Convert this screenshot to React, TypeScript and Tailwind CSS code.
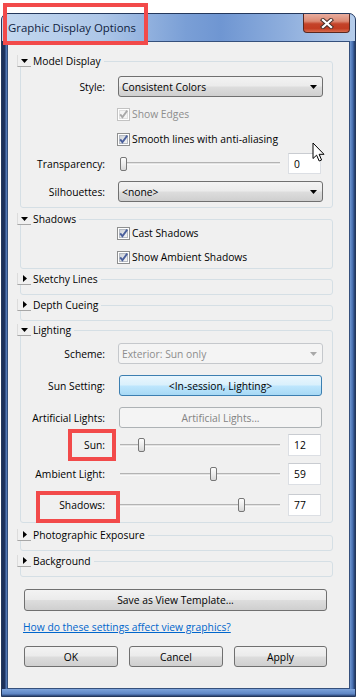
import React from "react";

const btnGrad =
  "bg-[linear-gradient(180deg,#f3f3f3_0%,#ebebeb_48%,#dddddd_52%,#cfcfcf_100%)]";

function DownTri({ color = "#000" }: { color?: string }) {
  return (
    <svg width="7" height="4" viewBox="0 0 7 4" className="shrink-0">
      <path d="M0 0H7L3.5 4Z" fill={color} />
    </svg>
  );
}

function RightTri() {
  return (
    <svg width="4" height="7" viewBox="0 0 4 7" className="shrink-0">
      <path d="M0 0L4 3.5L0 7Z" fill="#000" />
    </svg>
  );
}

function CheckBox({ disabled }: { disabled?: boolean }) {
  return (
    <svg width="13" height="13" viewBox="0 0 13 13" className="shrink-0">
      <defs>
        <linearGradient id="cbg" x1="0" y1="0" x2="1" y2="1">
          <stop offset="0" stopColor="#cbcfd5" />
          <stop offset="1" stopColor="#f7f7f7" />
        </linearGradient>
      </defs>
      <rect x="0.5" y="0.5" width="12" height="12" fill="#fff" stroke={disabled ? "#c2c2c2" : "#8e8f8f"} />
      <rect
        x="2.5"
        y="2.5"
        width="8"
        height="8"
        fill={disabled ? "#f4f4f4" : "url(#cbg)"}
        stroke={disabled ? "#e0e0e0" : "#b5bac2"}
      />
      <path
        d="M3.2 6.4 L5.4 9.2 L10.2 2.6"
        stroke={disabled ? "#a9a9a9" : "#4a5f9c"}
        strokeWidth="1.9"
        fill="none"
      />
    </svg>
  );
}

function Row({ label, h, children, className = "" }: { label: string; h: string; children: React.ReactNode; className?: string }) {
  return (
    <div className={"flex items-center " + h + " " + className}>
      <div className="w-[84px] shrink-0 text-right text-[10.3px] leading-[12px]">{label}</div>
      <div className="ml-[13px] flex items-center">{children}</div>
    </div>
  );
}

function Select({ text, disabled }: { text: string; disabled?: boolean }) {
  return (
    <div
      className={
        disabled
          ? "flex h-[21px] w-[205px] items-center justify-between rounded-[3px] border border-[#c5c8cc] bg-[#f4f4f4] pl-[3px] pr-[5px]"
          : "flex h-[21px] w-[205px] items-center justify-between rounded-[3px] border border-[#707070] pl-[3px] pr-[5px] " + btnGrad
      }
    >
      <span className={disabled ? "text-[10.3px] leading-[12px] text-[#8d8d8d]" : "text-[10.3px] leading-[12px] text-black"}>{text}</span>
      <DownTri color={disabled ? "#a8a8a8" : "#000"} />
    </div>
  );
}

function Check({ label, disabled, className = "" }: { label: string; disabled?: boolean; className?: string }) {
  return (
    <div className={"flex h-[20px] items-center pl-[96px] " + className}>
      <CheckBox disabled={disabled} />
      <span className={disabled ? "ml-[2px] text-[10.3px] leading-[12px] text-[#8d8d8d]" : "ml-[2px] text-[10.3px] leading-[12px] text-black"}>
        {label}
      </span>
    </div>
  );
}

function Slider({ value }: { value: number }) {
  const left = 3 + (value / 100) * 154 - 3.5;
  return (
    <div className="relative ml-[2px] flex h-[16px] w-[160px] items-center">
      <div className="h-[3px] w-full border-t border-t-[#b3b3b3] border-b border-b-[#f8f8f8] bg-[#e3e3e3]" />
      <div
        className="absolute top-[1px] h-[14px] w-[7px] rounded-[2px] border border-[#777] bg-[linear-gradient(180deg,#fdfdfd_0%,#e9e9e9_60%,#d6d6d6_100%)]"
        style={{ left }}
      />
    </div>
  );
}

function NumBox({ value, h = "h-[22px]" }: { value: string; h?: string }) {
  return (
    <div className={"ml-[8px] flex w-[33px] items-center border border-[#dcdfe4] border-t-[#c9ccd1] bg-white pl-[5px] text-[10.3px] leading-[12px] " + h}>
      {value}
    </div>
  );
}

function Group({
  title,
  open,
  className = "",
  children,
}: {
  title: string;
  open: boolean;
  className?: string;
  children?: React.ReactNode;
}) {
  return (
    <div className={className}>
      <div className="relative z-10 ml-[9px] flex h-[12px] w-fit items-center bg-[#f0f0f0] pr-[3px]">
        <div className="flex h-[12px] w-[14px] items-center justify-center border-b border-l border-b-[#a7a7a7] border-l-[#dcdcdc]">
          {open ? <DownTri /> : <RightTri />}
        </div>
        <span className="ml-[2px] text-[10.3px] leading-[12px]">{title}</span>
      </div>
      <div
        className={
          open
            ? "-mt-[6px] ml-[12px] w-[313px] rounded-[3px] border border-[#d5dfe5]"
            : "-mt-[6px] ml-[12px] h-[16px] w-[313px] rounded-[3px] border border-[#d5dfe5]"
        }
      >
        {children}
      </div>
    </div>
  );
}

function Button({ label, w }: { label: string; w: string }) {
  return (
    <div className={"flex h-[21px] items-center justify-center rounded-[3px] border border-[#707070] text-[10.3px] leading-[12px] " + w + " " + btnGrad}>
      {label}
    </div>
  );
}

export default function App() {
  return (
    <div className="relative h-[697px] w-[357px] overflow-hidden bg-white text-black [font-family:'Open_Sans',sans-serif]">
      <div className="ml-[1px] mt-[13px] flex h-[684px] w-[355px] flex-col overflow-hidden rounded-t-[7px] border border-[#24385c] bg-[#5b80bb]">
        {/* title bar */}
        <div className="flex h-[27px] shrink-0 items-start justify-between bg-[linear-gradient(90deg,#c4d8ef_0%,#aec7e8_28%,#7a9fd6_52%,#6f96d2_62%,#8eaedd_80%,#b6cdeb_100%)]">
          <div className="pl-[6px] pt-[7px] text-[11.4px] leading-[14px] text-[#0f2240]">Graphic Display Options</div>
          <div className="mr-[5px] flex h-[19px] w-[47px] items-center justify-center rounded-b-[4px] border border-t-0 border-[#5a2820] bg-[linear-gradient(180deg,#e8ad9f_0%,#dc8a74_40%,#c4432a_55%,#c23c22_80%,#d86d50_100%)]">
            <svg width="14" height="11" viewBox="0 0 14 11">
              <path d="M3 2 L11 9 M11 2 L3 9" stroke="#47302c" strokeWidth="4.2" strokeLinecap="square" />
              <path d="M3 2 L11 9 M11 2 L3 9" stroke="#ffffff" strokeWidth="2.3" strokeLinecap="square" />
            </svg>
          </div>
        </div>
        {/* middle */}
        <div className="flex h-[648px] shrink-0">
          <div className="w-[5px] bg-[linear-gradient(90deg,#1a2e56_0%,#1d3360_50%,#5c86c7_100%)]" />
          <div className="w-[343px] border border-[#35507c] bg-[#f0f0f0]">
            <Group title="Model Display" open className="mt-[13px]">
              <div className="pb-[5px] pt-[14px]">
                <Row label="Style:" h="h-[21px]">
                  <Select text="Consistent Colors" />
                </Row>
                <Check label="Show Edges" disabled className="mt-[7px]" />
                <Check label="Smooth lines with anti-aliasing" className="mt-[5px]" />
                <Row label="Transparency:" h="h-[21px]" className="mt-[4px]">
                  <Slider value={0} />
                  <NumBox value="0" h="h-[21px]" />
                </Row>
                <Row label="Silhouettes:" h="h-[21px]" className="mt-[7px]">
                  <Select text="<none>" />
                </Row>
              </div>
            </Group>
            <Group title="Shadows" open className="mt-[5px]">
              <div className="pb-[1px] pt-[3px]">
                <Check label="Cast Shadows" />
                <Check label="Show Ambient Shadows" className="mt-[4px]" />
              </div>
            </Group>
            <Group title="Sketchy Lines" open={false} className="mt-[4px]" />
            <Group title="Depth Cueing" open={false} className="mt-[4px]" />
            <Group title="Lighting" open className="mt-[3px]">
              <div className="pb-[6px] pt-[12px]">
                <Row label="Scheme:" h="h-[21px]">
                  <Select text="Exterior: Sun only" disabled />
                </Row>
                <Row label="Sun Setting:" h="h-[21px]" className="mt-[11px]">
                  <div className="ml-[1px] flex h-[21px] w-[203px] items-center justify-center rounded-[3px] border border-[#3c7fb1] bg-[linear-gradient(180deg,#eaf6fd_0%,#d9f0fc_48%,#bee6fd_52%,#a7d9f5_100%)] text-[10.3px] leading-[12px]">
                    &lt;In-session, Lighting&gt;
                  </div>
                </Row>
                <Row label="Artificial Lights:" h="h-[21px]" className="mt-[11px]">
                  <div className="ml-[1px] flex h-[21px] w-[203px] items-center justify-center rounded-[3px] border border-[#adb2b5] bg-[#f4f4f4] text-[10.3px] leading-[12px] text-[#838383]">
                    Artificial Lights...
                  </div>
                </Row>
                <Row label="Sun:" h="h-[22px]" className="mt-[6px]">
                  <Slider value={12} />
                  <NumBox value="12" />
                </Row>
                <Row label="Ambient Light:" h="h-[22px]" className="mt-[7px]">
                  <Slider value={59} />
                  <NumBox value="59" />
                </Row>
                <Row label="Shadows:" h="h-[22px]" className="mt-[9px]">
                  <Slider value={77} />
                  <NumBox value="77" />
                </Row>
              </div>
            </Group>
            <Group title="Photographic Exposure" open={false} className="mt-[6px]" />
            <Group title="Background" open={false} className="mt-[4px]" />
            <div className="ml-[16px] mt-[12px] flex h-[22px] w-[303px] items-center justify-center rounded-[3px] border border-[#707070] text-[10.3px] leading-[12px] bg-[linear-gradient(180deg,#f3f3f3_0%,#ebebeb_48%,#dddddd_52%,#cfcfcf_100%)]">
              Save as View Template...
            </div>
            <div className="ml-[15px] mt-[9px] h-[14px] text-[10.3px] leading-[14px] text-[#0066cc] underline">
              How do these settings affect view graphics?
            </div>
            <div className="ml-[16px] mt-[12px] flex gap-[11px]">
              <Button label="OK" w="w-[94px]" />
              <Button label="Cancel" w="w-[94px]" />
              <Button label="Apply" w="w-[93px]" />
            </div>
          </div>
          <div className="w-[5px] bg-[linear-gradient(90deg,#6f97d2_0%,#4a72b3_50%,#213a68_100%)]" />
        </div>
        <div className="flex-1 bg-[linear-gradient(180deg,#7da3da_0%,#5e86c4_70%,#2a4373_100%)]" />
      </div>

      {/* annotations */}
      <div className="absolute left-[3px] top-[3px] h-[42px] w-[145px] border-[4px] border-[#f24a4a]" />
      <div className="absolute left-[68px] top-[429px] h-[32px] w-[48px] border-[4px] border-[#f24a4a]" />
      <div className="absolute left-[36px] top-[491px] h-[32px] w-[84px] border-[4px] border-[#f24a4a]" />

      {/* mouse cursor */}
      <svg className="absolute left-[312px] top-[142px]" width="14" height="21" viewBox="0 0 14 21">
        <path
          d="M1 1 L1 16.5 L4.6 13.2 L7.2 19 L9.6 18 L7.1 12.3 L12 12.3 Z"
          fill="#ffffff"
          stroke="#000000"
          strokeWidth="1"
          strokeLinejoin="miter"
        />
      </svg>
    </div>
  );
}
